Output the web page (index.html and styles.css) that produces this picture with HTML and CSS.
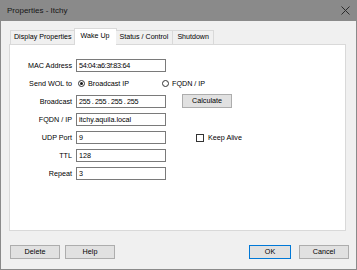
FILE: index.html
```html
<!DOCTYPE html>
<html>
<head>
  <title>Properties - Itchy</title>
  <link rel="stylesheet" href="styles.css">
</head>
<body>
  <div class="window">
    <div class="titlebar">
      <span class="title">Properties - Itchy</span>
      <svg class="close" width="9" height="9" viewBox="0 0 9 9">
        <path d="M0.5 0.5 L8.5 8.5 M8.5 0.5 L0.5 8.5" stroke="#2b2b2b" stroke-width="1"/>
      </svg>
    </div>
    <div class="content">
      <div class="tabs">
        <div class="tab">Display Properties</div>
        <div class="tab active">Wake Up</div>
        <div class="tab">Status / Control</div>
        <div class="tab">Shutdown</div>
      </div>
      <div class="panel">
        <div class="form">
          <label>MAC Address</label>
          <div class="field num">54:04:a6:3f:83:64</div>
          <div></div>

          <label>Send WOL to</label>
          <div class="radios">
            <div class="option first"><span class="radio checked"></span>Broadcast IP</div>
            <div class="option"><span class="radio"></span>FQDN / IP</div>
          </div>

          <label>Broadcast</label>
          <div class="field ip">
            <span class="seg">255</span><span class="dot">.</span>
            <span class="seg">255</span><span class="dot">.</span>
            <span class="seg">255</span><span class="dot">.</span>
            <span class="seg">255</span>
          </div>
          <div><div class="button calc">Calculate</div></div>

          <label>FQDN / IP</label>
          <div class="field">itchy.aquila.local</div>
          <div></div>

          <label>UDP Port</label>
          <div class="field">9</div>
          <div class="check"><span class="box"></span>Keep Alive</div>

          <label>TTL</label>
          <div class="field">128</div>
          <div></div>

          <label>Repeat</label>
          <div class="field">3</div>
          <div></div>
        </div>
      </div>
      <div class="buttons">
        <div class="button">Delete</div>
        <div class="button">Help</div>
        <div class="spacer"></div>
        <div class="button ok">OK</div>
        <div class="button">Cancel</div>
      </div>
    </div>
  </div>
</body>
</html>
```

FILE: styles.css
```css
body {
  margin: 0;
  font-family: "Liberation Sans", Arial, sans-serif;
  font-size: 7.2px;
  color: #000;
  background: #ffffff;
}

.window {
  width: 357px;
  height: 270px;
  box-sizing: border-box;
  border: 1px solid #8a8a8a;
  border-top: none;
  background: #f0f0f0;
  display: flex;
  flex-direction: column;
}

.titlebar {
  height: 21px;
  background: #8a8a8a;
  display: flex;
  align-items: center;
  justify-content: space-between;
  padding: 0 6px 1px 6px;
  box-sizing: border-box;
}

.title {
  font-size: 8px;
  color: #161616;
}

.content {
  padding: 7px 10px 0 8px;
  display: flex;
  flex-direction: column;
}

/* tab strip */
.tabs {
  display: flex;
  align-items: flex-end;
  height: 16px;
  padding-left: 1px;
  position: relative;
  z-index: 1;
  font-size: 7.1px;
}

.tab {
  height: 14px;
  box-sizing: border-box;
  line-height: 13px;
  padding: 0 3px;
  border: 1px solid #d9d9d9;
  border-bottom: none;
  border-right: none;
  background: #f0f0f0;
}

.tab:nth-child(3) {
  padding: 0 4px 0 3px;
}

.tab:nth-child(4) {
  padding: 0 4px;
  border-right: 1px solid #d9d9d9;
}

.tab.active {
  height: 17px;
  line-height: 15px;
  margin: 0 -1px -1px -1px;
  padding: 0 7px 0 6px;
  background: #ffffff;
  border-right: 1px solid #d9d9d9;
}

.tab.active + .tab {
  border-left: none;
}

.panel {
  height: 187px;
  box-sizing: border-box;
  border: 1px solid #d9d9d9;
  background: #ffffff;
  padding-top: 14px;
}

/* form grid */
.form {
  display: grid;
  grid-template-columns: 62px 90px 1fr;
  grid-auto-rows: 13px;
  column-gap: 4px;
  row-gap: 5px;
}

.form label {
  text-align: right;
  line-height: 13px;
}

.field {
  height: 13px;
  box-sizing: border-box;
  border: 1px solid #7a7a7a;
  background: #ffffff;
  padding: 0 2px;
  line-height: 11px;
  white-space: nowrap;
}

.num {
  letter-spacing: -0.3px;
}

.ip {
  display: flex;
  letter-spacing: -0.3px;
}

.seg {
  width: 11px;
  text-align: center;
}

.dot {
  width: 5px;
  text-align: center;
}

.radios {
  grid-column: 2 / 4;
  display: flex;
  align-items: center;
  padding-left: 2px;
}

.option {
  display: flex;
  align-items: center;
  gap: 3px;
}

.option.first {
  width: 84px;
}

.radio {
  width: 7px;
  height: 7px;
  box-sizing: border-box;
  border: 1px solid #333333;
  border-radius: 50%;
  display: flex;
  align-items: center;
  justify-content: center;
}

.radio.checked::after {
  content: "";
  width: 3px;
  height: 3px;
  border-radius: 50%;
  background: #1a1a1a;
}

.check {
  display: flex;
  align-items: center;
  gap: 4px;
  margin-left: 26px;
}

.box {
  width: 8px;
  height: 8px;
  box-sizing: border-box;
  border: 1px solid #333333;
  background: #ffffff;
}

/* buttons */
.button {
  width: 50px;
  height: 14px;
  box-sizing: border-box;
  border: 1px solid #adadad;
  background: #e1e1e1;
  text-align: center;
  line-height: 12px;
}

.calc {
  margin: -1px 0 0 12px;
}

.buttons {
  display: flex;
  gap: 5px;
  margin: 14px -3px 0 1px;
}

.spacer {
  flex: 1;
}

.button.ok {
  width: 42px;
  border-color: #0078d7;
  margin-right: 3px;
}
```
